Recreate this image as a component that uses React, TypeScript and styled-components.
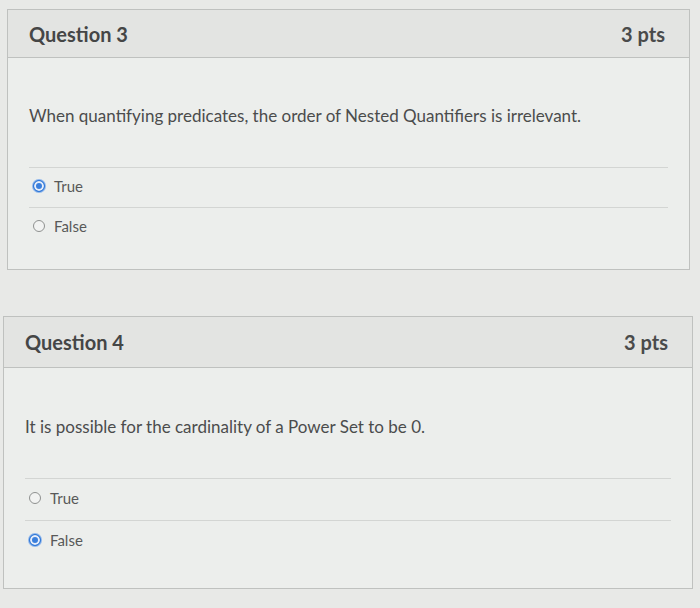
import React from 'react';
import styled, { createGlobalStyle } from 'styled-components';

type Answer = {
  label: string;
  checked?: boolean;
};

type Question = {
  title: string;
  points: string;
  text: string;
  answers: Answer[];
  inset: number;
  width: number;
  top: number;
  headerHeight: number;
  textGap: number;
  listGap: number;
  rowHeight: number;
  bottomGap: number;
};

const questions: Question[] = [
  {
    title: 'Question 3',
    points: '3 pts',
    text: 'When quantifying predicates, the order of Nested Quantifiers is irrelevant.',
    answers: [{ label: 'True', checked: true }, { label: 'False' }],
    inset: 7,
    width: 683,
    top: 9,
    headerHeight: 48,
    textGap: 47,
    listGap: 40,
    rowHeight: 40,
    bottomGap: 22,
  },
  {
    title: 'Question 4',
    points: '3 pts',
    text: 'It is possible for the cardinality of a Power Set to be 0.',
    answers: [{ label: 'True' }, { label: 'False', checked: true }],
    inset: 3,
    width: 690,
    top: 46,
    headerHeight: 51,
    textGap: 48,
    listGap: 40,
    rowHeight: 42,
    bottomGap: 26,
  },
];

const GlobalStyle = createGlobalStyle`
  html, body {
    margin: 0;
    padding: 0;
    background: #e8e9e7;
  }
  body {
    font-family: Lato, "Liberation Sans", sans-serif;
    color: #4a4b4b;
  }
`;

const Page = styled.div`
  width: 700px;
  height: 608px;
  overflow: hidden;
  background: #e8e9e7;
`;

const Card = styled.section<{ $inset: number; $width: number; $top: number }>`
  margin-left: ${(p) => p.$inset}px;
  margin-top: ${(p) => p.$top}px;
  width: ${(p) => p.$width}px;
  border: 1px solid #bfc1bf;
  background: #eceeec;
  box-sizing: border-box;
`;

const Header = styled.header<{ $height: number }>`
  height: ${(p) => p.$height}px;
  display: flex;
  align-items: center;
  justify-content: space-between;
  padding: 0 24px 0 21px;
  background: #e3e4e2;
  border-bottom: 1px solid #bfc1bf;
  box-sizing: border-box;
`;

const Title = styled.h2`
  margin: 0;
  font-size: 20px;
  font-weight: 700;
  color: #454646;
`;

const Points = styled.span`
  font-size: 20px;
  font-weight: 700;
  color: #4a4b4b;
`;

const Body = styled.div<{ $textGap: number; $bottomGap: number }>`
  padding: ${(p) => p.$textGap}px 21px ${(p) => p.$bottomGap}px 21px;
`;

const Text = styled.p<{ $listGap: number }>`
  margin: 0 0 ${(p) => p.$listGap}px;
  font-size: 17px;
  line-height: 22px;
  color: #4b4c4c;
`;

const AnswerList = styled.ul`
  list-style: none;
  margin: 0;
  padding: 0;
`;

const AnswerRow = styled.li<{ $height: number }>`
  height: ${(p) => p.$height}px;
  display: flex;
  align-items: center;
  gap: 9px;
  padding: 0 0 4px 4px;
  box-sizing: border-box;
  border-top: 1px solid #d3d5d3;
  font-size: 15px;
  color: #585959;
`;

const Radio = styled.span<{ $checked?: boolean }>`
  width: 12px;
  height: 12px;
  border-radius: 50%;
  box-sizing: border-box;
  flex-shrink: 0;
  border: 1px solid ${(p) => (p.$checked ? '#2f78d6' : '#8f9190')};
  background: ${(p) => (p.$checked ? '#3a7fdc' : '#f2f3f2')};
  box-shadow: ${(p) =>
    p.$checked ? 'inset 0 0 0 2px #e8eefa, 0 0 0 1px #8fb6ec' : 'none'};
`;

const App: React.FC = () => (
  <Page>
    <GlobalStyle />
    {questions.map((q) => (
      <Card key={q.title} $inset={q.inset} $width={q.width} $top={q.top}>
        <Header $height={q.headerHeight}>
          <Title>{q.title}</Title>
          <Points>{q.points}</Points>
        </Header>
        <Body $textGap={q.textGap} $bottomGap={q.bottomGap}>
          <Text $listGap={q.listGap}>{q.text}</Text>
          <AnswerList>
            {q.answers.map((a) => (
              <AnswerRow key={a.label} $height={q.rowHeight}>
                <Radio $checked={a.checked} />
                {a.label}
              </AnswerRow>
            ))}
          </AnswerList>
        </Body>
      </Card>
    ))}
  </Page>
);

export default App;
